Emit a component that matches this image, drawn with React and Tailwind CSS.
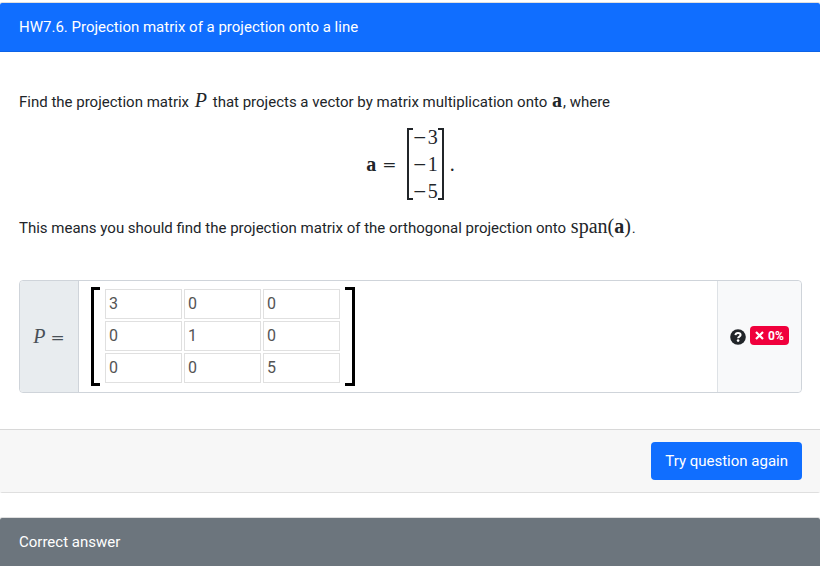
import { useState } from "react";

const VECTOR = ["3", "1", "5"];

const SUBMITTED = [
  ["3", "0", "0"],
  ["0", "1", "0"],
  ["0", "0", "5"],
];

function QuestionIcon() {
  return (
    <svg width="16" height="16" viewBox="0 0 16 16" aria-hidden="true">
      <circle cx="8" cy="8" r="7.8" fill="#212529" />
      <path
        d="M5.4 6.2C5.6 4.7 6.5 4 8 4c1.6 0 2.6.8 2.6 2.1 0 1.7-2.5 1.5-2.5 3.2"
        fill="none"
        stroke="#fff"
        strokeWidth="2"
      />
      <circle cx="8.1" cy="11.6" r="1.3" fill="#fff" />
    </svg>
  );
}

function CrossIcon() {
  return (
    <svg width="9" height="9" viewBox="0 0 9 9" aria-hidden="true">
      <path d="M1 1l7 7M8 1L1 8" stroke="#fff" strokeWidth="2.2" />
    </svg>
  );
}

function MathText({ children, className = "" }) {
  return <span className={`font-['Liberation_Serif',serif] text-xl leading-6 ${className}`}>{children}</span>;
}

function Operator({ children }) {
  return <span className="font-['DejaVu_Serif',serif] text-[17px] font-normal">{children}</span>;
}

function VectorEquation() {
  return (
    <div className="my-3.5 flex items-center justify-center">
      <MathText className="font-bold">a</MathText>
      <span className="mx-1.5">
        <Operator>=</Operator>
      </span>
      <div className="ml-1 flex">
        <span className="w-1.5 border-y-2 border-l-2 border-[#212529]" />
        <div className="flex h-[72px] flex-col justify-between">
          {VECTOR.map((v) => (
            <MathText key={v} className="flex h-[18px] items-center gap-px leading-[18px]">
              <Operator>−</Operator>
              {v}
            </MathText>
          ))}
        </div>
        <span className="w-1.5 border-y-2 border-r-2 border-[#212529]" />
      </div>
      <MathText className="ml-1.5">.</MathText>
    </div>
  );
}

function MatrixInput() {
  const [cells, setCells] = useState(SUBMITTED);

  function update(r, c, value) {
    setCells(cells.map((row, i) => (i === r ? row.map((v, j) => (j === c ? value : v)) : row)));
  }

  return (
    <div className="flex items-center gap-[5px]">
      <span className="h-[99px] w-[9px] border-y-3 border-l-3 border-black" />
      <div className="mb-0.5 grid grid-cols-3 gap-0.5">
        {cells.map((row, r) =>
          row.map((v, c) => (
            <input
              key={`${r}-${c}`}
              type="text"
              aria-label={`P row ${r + 1} column ${c + 1}`}
              value={v}
              onChange={(e) => update(r, c, e.target.value)}
              className="h-[30px] w-[77px] border border-[#e0e0e0] bg-white px-[3px] text-base text-[#545454]"
            />
          ))
        )}
      </div>
      <span className="h-[99px] w-[10px] border-y-3 border-r-3 border-black" />
    </div>
  );
}

export default function App() {
  return (
    <main className="bg-white pt-0.5 font-['Roboto',sans-serif] text-[15px] leading-6 text-[#212529]">
      <section className="rounded-xs border-y border-[#dfdfdf]">
        <h1 className="rounded-t-xs border-b border-[#0d63e6] bg-[#106eff] px-[19px] py-3 text-white">
          HW7.6. Projection matrix of a projection onto a line
        </h1>

        <div className="py-9 pr-[18px] pl-[19px]">
          <p>
            Find the projection matrix <MathText className="mx-0.5 italic">P</MathText> that projects a vector by
            matrix multiplication onto <MathText className="mx-px font-bold">a</MathText>, where
          </p>
          <VectorEquation />
          <p>
            This means you should find the projection matrix of the orthogonal projection onto{" "}
            <MathText className="mx-px">
              span(<b>a</b>)
            </MathText>
            .
          </p>

          <div className="mt-10 flex rounded border border-[#cfd4da]">
            <div className="flex w-[59px] items-center justify-center rounded-l border-r border-[#cfd4da] bg-[#e8ecef] text-[#495057]">
              <MathText>
                <i>P</i> <Operator>=</Operator>
              </MathText>
            </div>
            <div className="flex-1 px-3 py-1.5">
              <MatrixInput />
            </div>
            <div className="flex w-[84px] items-center justify-center gap-1 rounded-r border-l border-[#dee2e6] bg-[#f8f9fa]">
              <button type="button" aria-label="Help">
                <QuestionIcon />
              </button>
              <span className="mb-0.5 flex h-[19px] w-[39px] items-center justify-center gap-1 rounded bg-[#f0003c] text-xs font-bold text-white">
                <CrossIcon />
                0%
              </span>
            </div>
          </div>
        </div>

        <div className="flex justify-end border-t border-[#d8d8d8] bg-[#f7f7f7] px-[18px] py-3">
          <button type="button" className="h-[38px] rounded bg-[#106eff] px-3.5 text-white">
            Try question again
          </button>
        </div>
      </section>

      <section className="mt-6 rounded-t-xs border-t border-[#dfdfdf]">
        <h2 className="rounded-t-xs border-b border-[#62696f] bg-[#6c757d] px-[19px] py-3 text-white">Correct answer</h2>
      </section>
    </main>
  );
}
